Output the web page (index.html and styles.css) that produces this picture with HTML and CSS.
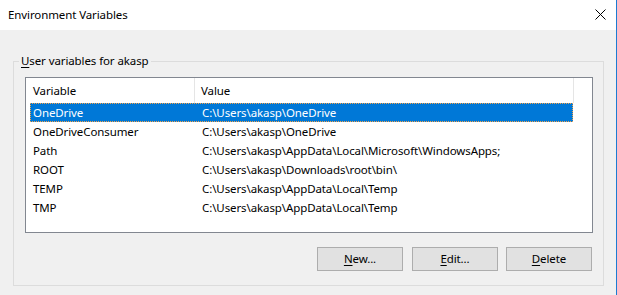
FILE: index.html
```html
<!DOCTYPE html>
<html>
<head>
<meta charset="utf-8">
<link rel="stylesheet" href="styles.css">
</head>
<body>
<div class="window">
  <div class="titlebar">
    <span class="title">Environment Variables</span>
    <svg class="close" width="11" height="11" viewBox="0 0 11 11"><path d="M0.5 0.5 L10.5 10.5 M10.5 0.5 L0.5 10.5" stroke="#000" stroke-width="1" fill="none"/></svg>
  </div>
  <div class="body">
    <fieldset class="group">
      <legend class="legend"><u>U</u>ser variables for akasp</legend>
      <div class="list">
        <div class="header">
          <div class="hcell c1">Variable</div>
          <div class="sep"></div>
          <div class="hcell c2">Value</div>
          <div class="sep"></div>
        </div>
        <div class="row selected"><div class="cell c1">OneDrive</div><div class="cell c2">C:\Users\akasp\OneDrive</div></div>
        <div class="row"><div class="cell c1">OneDriveConsumer</div><div class="cell c2">C:\Users\akasp\OneDrive</div></div>
        <div class="row"><div class="cell c1">Path</div><div class="cell c2">C:\Users\akasp\AppData\Local\Microsoft\WindowsApps;</div></div>
        <div class="row"><div class="cell c1">ROOT</div><div class="cell c2">C:\Users\akasp\Downloads\root\bin\</div></div>
        <div class="row"><div class="cell c1">TEMP</div><div class="cell c2">C:\Users\akasp\AppData\Local\Temp</div></div>
        <div class="row"><div class="cell c1">TMP</div><div class="cell c2">C:\Users\akasp\AppData\Local\Temp</div></div>
      </div>
      <div class="buttons">
        <button class="btn btn-new"><u>N</u>ew...</button>
        <button class="btn"><u>E</u>dit...</button>
        <button class="btn"><u>D</u>elete</button>
      </div>
    </fieldset>
  </div>
</div>
</body>
</html>
```

FILE: styles.css
```css
* { box-sizing: border-box; }
html, body { margin: 0; padding: 0; }
body {
  width: 617px;
  height: 295px;
  overflow: hidden;
  font-family: "Noto Sans", "Open Sans", sans-serif;
  font-size: 11.5px;
  letter-spacing: -0.1px;
  color: #000;
  background: #f0f0f0;
}
.window {
  width: 617px;
  height: 295px;
  border-right: 1px solid #1c7bd2;
  background: #f0f0f0;
}
.titlebar {
  height: 30px;
  background: #fff;
  display: flex;
  align-items: center;
  justify-content: space-between;
  padding-left: 8px;
  padding-right: 10px;
}
.title { line-height: 16px; }
.close { display: block; margin-top: -1px; }
.body {
  padding-top: 23px;
  padding-left: 13px;
}
.group {
  margin: 0;
  width: 591px;
  border: 1px solid #dcdcdc;
  padding: 8px 10px 14px 11px;
  min-width: 0;
}
.legend {
  margin-left: -6px;
  padding: 0 2px;
  line-height: 16px;
  height: 16px;
}
.legend u { text-decoration-thickness: 1px; text-underline-offset: 2px; }
.list {
  width: 568px;
  height: 156px;
  border: 1px solid #828790;
  background: #fff;
  padding-left: 4px;
}
.header {
  display: flex;
  height: 25px;
  align-items: stretch;
}
.hcell {
  display: flex;
  align-items: center;
  line-height: 16px;
}
.header .c1 { width: 164px; padding-left: 3px; }
.header .c2 { width: 378px; padding-left: 6px; }
.sep { width: 1px; background: #e5e5e5; }
.row {
  display: flex;
  height: 19px;
  width: 543px;
  align-items: center;
  line-height: 16px;
  border: 1px solid transparent;
}
.row .c1 { width: 164px; padding-left: 2px; white-space: nowrap; }
.row .c2 { padding-left: 7px; white-space: nowrap; }
.row.selected {
  background: #0078d7;
  color: #fff;
  border: 1px dotted #f5a34a;
}
.buttons {
  display: flex;
  justify-content: flex-end;
  gap: 8px;
  margin-top: 14px;
  padding-right: 1px;
}
.btn {
  width: 86px;
  height: 24px;
  background: #e1e1e1;
  border: 1px solid #adadad;
  font-family: inherit;
  font-size: 11.5px;
  letter-spacing: -0.1px;
  color: #000;
  padding: 0;
  margin: 0;
  line-height: 16px;
}
.btn-new { margin-right: 1px; }
.btn u { text-decoration-thickness: 1px; text-underline-offset: 2px; }
```
